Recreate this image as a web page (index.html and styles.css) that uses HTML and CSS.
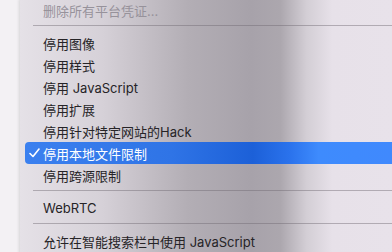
FILE: index.html
```html
<!DOCTYPE html>
<html lang="zh-CN">
<head>
    <meta charset="UTF-8">
    <title>开发菜单</title>
    <link rel="stylesheet" href="styles.css">
</head>
<body>
    <div class="menu">
        <div class="menu-item disabled">删除所有平台凭证...</div>
        <div class="separator"></div>
        <div class="menu-item">停用图像</div>
        <div class="menu-item">停用样式</div>
        <div class="menu-item">停用 JavaScript</div>
        <div class="menu-item">停用扩展</div>
        <div class="menu-item">停用针对特定网站的Hack</div>
        <div class="menu-item selected">
            <svg class="check" width="11" height="10" viewBox="0 0 11 10">
                <polyline points="1,5.5 4,8.5 10,1" fill="none" stroke="#fff" stroke-width="1.6" stroke-linecap="round" stroke-linejoin="round"/>
            </svg>
            停用本地文件限制
        </div>
        <div class="menu-item">停用跨源限制</div>
        <div class="separator"></div>
        <div class="menu-item">WebRTC</div>
        <div class="separator"></div>
        <div class="menu-item">允许在智能搜索栏中使用 JavaScript</div>
    </div>
</body>
</html>
```

FILE: styles.css
```css
* {
    margin: 0;
    padding: 0;
    box-sizing: border-box;
}

body {
    background: #f3f1f4;
    font-family: 'Inter', 'Noto Sans CJK SC', sans-serif;
    font-size: 13px;
    overflow: hidden;
}

.menu {
    margin-left: 20px;
    margin-top: -1px;
    padding-left: 5px;
    height: 260px;
    background: linear-gradient(90deg, #e5e1e7 0%, #d6d1d8 22%, #b3aeb5 45%, #a7a2aa 62%, #acA7ae 70%, #d3ced5 77%, #e7e1e9 84%, #e8e2ea 100%);
    box-shadow: -1px 0 3px rgba(0, 0, 0, 0.12);
}

.menu-item {
    height: 22px;
    display: flex;
    align-items: center;
    padding-left: 18px;
    color: #262427;
    white-space: nowrap;
}

.menu-item.disabled {
    color: #97929b;
}

.menu-item.selected {
    position: relative;
    color: #fff;
    border-radius: 4px 0 0 4px;
    background: linear-gradient(90deg, #3b80ef 0%, #2f74e6 40%, #1c60d8 62%, #2a72ec 72%, #3e8bfd 80%, #4089fd 100%);
}

.check {
    position: absolute;
    left: 4px;
    top: 6px;
}

.separator {
    height: 11px;
    padding-top: 4px;
    margin-left: 8px;
}

.separator::before {
    content: '';
    display: block;
    height: 1px;
    background: rgba(110, 104, 114, 0.45);
}
```
